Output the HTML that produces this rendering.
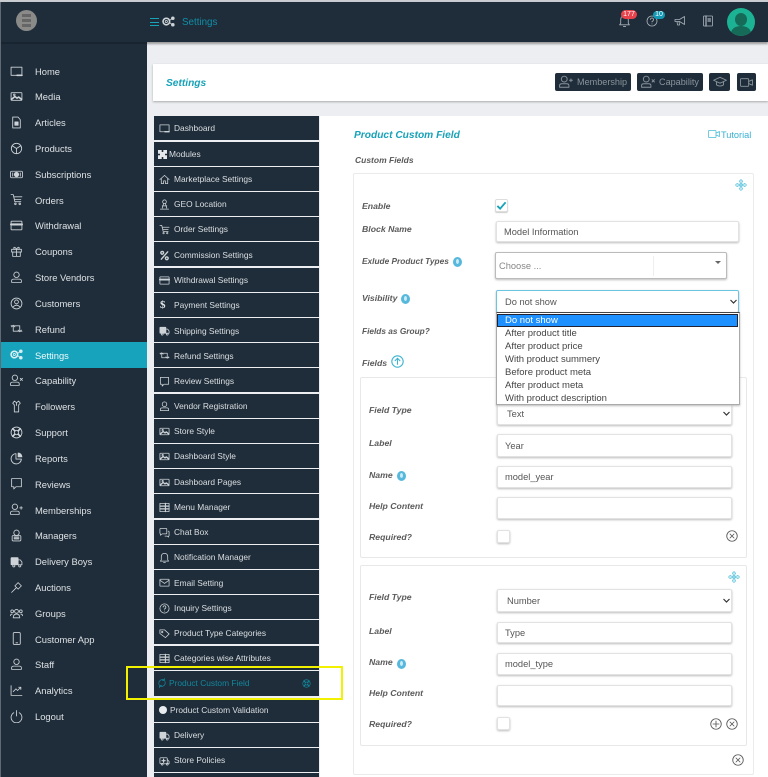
<!DOCTYPE html>
<html lang="en"><head><meta charset="utf-8"><title>Settings</title>
<style>
*{box-sizing:border-box}
html,body{margin:0;padding:0}
body{width:768px;height:777px;overflow:hidden;position:relative;background:#eceef2;font-family:"Liberation Sans",sans-serif;color:#444;filter:blur(.3px)}
.a{position:absolute}
.t{position:absolute;white-space:nowrap;line-height:12px;transform:translateY(-6px)}
.side{font-size:9.4px;color:#dde1e4;left:35px}
.sub{font-size:8.4px;color:#dbdfe2;left:174px}
.ic{position:absolute;width:13px;height:13px;color:#ced3d7;fill:none;stroke:currentColor;stroke-width:1.6;stroke-linecap:round;stroke-linejoin:round}
.si{width:11px;height:11px;left:159px;stroke-width:1.7}
.mi{left:10px}
.bar{position:absolute;left:154px;width:165px;height:24.2px;background:#1f2d3a}
.lb{position:absolute;white-space:nowrap;font-size:8.7px;font-style:italic;font-weight:bold;color:#5a5a5a;line-height:12px;transform:translateY(-6px)}
.in{position:absolute;background:#fff;border:1px solid #e2e2e2;border-radius:2px;box-shadow:0 1px 2px #bbb;font-size:9.3px;color:#555;line-height:20px;padding-left:7px}
.op{position:absolute;left:497px;width:241px;height:13px;font-size:9.5px;line-height:13px;padding-left:8px;color:#444;white-space:nowrap}
.info{position:absolute;width:9px;height:10px;border-radius:50%;background:#55b8dc}
.info:after{content:"";position:absolute;left:3px;top:2px;width:3px;height:5px;background:#cdebf5;border-radius:50%}
.btn{position:absolute;top:73px;height:18px;background:#1f2d3a;border-radius:2px;color:#8a949c;font-size:9.1px;line-height:18px;white-space:nowrap}
.tb{color:#aab3ba}
.teal{color:#5cc4dc}
</style></head><body>
<svg width="0" height="0" style="position:absolute"><defs>
<symbol id="mon" viewBox="0 0 24 24"><rect x="2" y="4" width="20" height="15"/><path d="M13 19h9" stroke-width="3"/></symbol>
<symbol id="img" viewBox="0 0 24 24"><rect x="2" y="5" width="20" height="14" rx="1"/><path d="M3 17l6-5 4 3 3-2 5 4" stroke-width="3"/><circle cx="8" cy="9" r="1.5"/></symbol>
<symbol id="doc" viewBox="0 0 24 24"><path d="M5 2h10l4 5v15H5z"/><rect x="9" y="11" width="6" height="6" fill="currentColor"/></symbol>
<symbol id="box" viewBox="0 0 24 24"><circle cx="12" cy="12" r="9.5"/><path d="M4 7l8 5 8-5M12 12v9"/></symbol>
<symbol id="cash" viewBox="0 0 24 24"><rect x="1" y="6" width="22" height="12" rx="2"/><circle cx="12" cy="12" r="4" fill="currentColor"/><path d="M5 9v6M19 9v6"/></symbol>
<symbol id="cart" viewBox="0 0 24 24"><path d="M2 3h4l3 13h11M7 7h15M8 12h12"/><circle cx="10" cy="20" r="1.5"/><circle cx="18" cy="20" r="1.5"/></symbol>
<symbol id="card" viewBox="0 0 24 24"><rect x="2" y="4" width="20" height="16" rx="1"/><path d="M2 10h20" stroke-width="4"/></symbol>
<symbol id="gift" viewBox="0 0 24 24"><rect x="3" y="8" width="18" height="5"/><path d="M5 13v8h14v-8M12 8v13M12 8C9 2 5 4 8 8M12 8c3-6 7-4 4 0"/></symbol>
<symbol id="user" viewBox="0 0 24 24"><circle cx="12" cy="7" r="5"/><path d="M3 21v-3q0-3 4-3h10q4 0 4 3v3z"/></symbol>
<symbol id="ucirc" viewBox="0 0 24 24"><circle cx="12" cy="12" r="10"/><circle cx="12" cy="9" r="3.5"/><path d="M6 18q6-6 12 0"/></symbol>
<symbol id="crop" viewBox="0 0 24 24"><path d="M6 6v11h16M18 18V7H2M3 9l3-3 3 3M15 15l3 3 3-3"/></symbol>
<symbol id="gear" viewBox="0 0 24 24"><circle cx="8" cy="12" r="6" stroke-dasharray="3 1.4" stroke-width="3"/><circle cx="8" cy="12" r="2"/><circle cx="20" cy="6" r="2.5" fill="currentColor"/><circle cx="20" cy="18" r="2.5" fill="currentColor"/><path d="M14 10l4-3M14 14l4 3"/></symbol>
<symbol id="uplus" viewBox="0 0 24 24"><circle cx="9" cy="7" r="5"/><path d="M1 21v-3q0-3 4-3h8q4 0 4 3v3zM18 9h5M20.500 6.500v5"/></symbol>
<symbol id="ux" viewBox="0 0 24 24"><circle cx="9" cy="7" r="5"/><path d="M1 21v-3q0-3 4-3h8q4 0 4 3v3zM19 8l4 4M23 8l-4 4"/></symbol>
<symbol id="shirt" viewBox="0 0 24 24"><path d="M8 2l4 3 4-3 3 4-3 3v13H8V9L5 6zM12 5v5"/></symbol>
<symbol id="life" viewBox="0 0 24 24"><circle cx="12" cy="12" r="10"/><circle cx="12" cy="12" r="4"/><path d="M5 5l4 4M19 5l-4 4M5 19l4-4M19 19l-4-4" stroke-width="3"/></symbol>
<symbol id="pie" viewBox="0 0 24 24"><path d="M11 3a9.500 9.500 0 1 0 10 10H11z"/><path d="M15 2a7 7 0 0 1 7 7h-7z" fill="currentColor"/></symbol>
<symbol id="chat" viewBox="0 0 24 24"><path d="M3 3h18v15H11l-4 4v-4H3z"/></symbol>
<symbol id="mgr" viewBox="0 0 24 24"><circle cx="12" cy="7" r="5"/><rect x="4" y="12" width="16" height="10" rx="2"/><path d="M8 15h8M8 18h8" stroke-width="2.500"/></symbol>
<symbol id="truck" viewBox="0 0 24 24"><rect x="2" y="5" width="13" height="13" rx="1" fill="currentColor"/><path d="M15 9h4l3 4v5h-7"/><circle cx="7" cy="20" r="2"/><circle cx="18" cy="20" r="2"/></symbol>
<symbol id="gavel" viewBox="0 0 24 24"><path d="M3 21l8-8M9 9l6-6 6 6-6 6z"/></symbol>
<symbol id="grp" viewBox="0 0 24 24"><circle cx="12" cy="8" r="3.500"/><circle cx="4" cy="8" r="2.500"/><circle cx="20" cy="8" r="2.500"/><path d="M6 20q0-7 6-7t6 7zM1 16q0-3 3-3M23 16q0-3-3-3"/></symbol>
<symbol id="phone" viewBox="0 0 24 24"><rect x="6" y="1" width="13" height="22" rx="2"/><path d="M11 20h3"/></symbol>
<symbol id="chart" viewBox="0 0 24 24"><path d="M2 3v18h20M6 14l5-5 3 3 6-6M16 6h4v4"/></symbol>
<symbol id="power" viewBox="0 0 24 24"><path d="M7 5a10 10 0 1 0 10 0M12 1v10"/></symbol>
<symbol id="home" viewBox="0 0 24 24"><path d="M2 12L12 3l10 9M5 10v11h5v-6h4v6h5V10"/></symbol>
<symbol id="geo" viewBox="0 0 24 24"><circle cx="12" cy="6" r="4"/><path d="M10 10l-3 10M14 10l3 10M3 22h18M7 15h10"/></symbol>
<symbol id="pct" viewBox="0 0 24 24"><path d="M19 4L5 20" stroke-width="3"/><circle cx="7" cy="6" r="3" stroke-width="3"/><circle cx="17" cy="18" r="3" stroke-width="3"/></symbol>
<symbol id="menu" viewBox="0 0 24 24"><rect x="2" y="3" width="20" height="18"/><path d="M2 9h20M2 15h20M14 3v18" stroke-width="2.500"/></symbol>
<symbol id="chats" viewBox="0 0 24 24"><path d="M2 5q0-2 2-2h11q2 0 2 2v8q0 2-2 2H7l-4 3v-3q-1-1-1-2z"/><path d="M20 9q2 0 2 2v7q0 1-1 2v2l-3-2h-5"/></symbol>
<symbol id="bell" viewBox="0 0 24 24"><path d="M12 3q-7 0-7 8v6l-2 3h18l-2-3v-6q0-8-7-8zM10 23h4"/></symbol>
<symbol id="mail" viewBox="0 0 24 24"><rect x="2" y="5" width="20" height="15" rx="1"/><path d="M2 7l10 7 10-7"/></symbol>
<symbol id="q" viewBox="0 0 24 24"><circle cx="12" cy="12" r="10"/><path d="M9 9q0-3 3-3t3 3-3 4v1M12 17.500v.5"/></symbol>
<symbol id="tag" viewBox="0 0 24 24"><path d="M2 4h10l10 9-8 8L2 12z"/><circle cx="7" cy="9" r="1.500"/></symbol>
<symbol id="sync" viewBox="0 0 24 24"><path d="M5 16A9 9 0 0 1 18 5M19 8a9 9 0 0 1-13 11M18 1v5h-5M6 23v-5h5"/></symbol>
<symbol id="med" viewBox="0 0 24 24"><rect x="2" y="6" width="16" height="13" rx="2"/><path d="M10 9v7M6.500 12.500h7" stroke-width="2.500"/><path d="M18 10l4 4v5h-4"/><circle cx="7" cy="20" r="2"/><circle cx="18" cy="20" r="2"/></symbol>
<symbol id="move" viewBox="0 0 24 24"><path d="M12 6v12M6 12h12M9 4l3-3 3 3v2H9zM9 20l3 3 3-3v-2H9zM4 9l-3 3 3 3h2V9zM20 9l3 3-3 3h-2V9z"/><circle cx="12" cy="12" r="3"/></symbol>
<symbol id="xc" viewBox="0 0 24 24"><circle cx="12" cy="12" r="10.500"/><path d="M8 8l8 8M16 8l-8 8"/></symbol>
<symbol id="plc" viewBox="0 0 24 24"><circle cx="12" cy="12" r="10.500"/><path d="M12 6v12M6 12h12"/></symbol>
<symbol id="vid" viewBox="0 0 24 24"><rect x="1" y="5" width="15" height="14" rx="1"/><path d="M16 10l7-3v10l-7-3"/></symbol>
<symbol id="cap" viewBox="0 0 24 24"><path d="M1 9l11-5 11 5-11 5zM6 12v5q6 4 12 0v-5"/></symbol>
<symbol id="mega" viewBox="0 0 24 24"><path d="M2 9h9l10-6v16l-10-6H2zM6 13l1 7h4l-1-7"/></symbol>
<symbol id="book" viewBox="0 0 24 24"><rect x="3" y="2" width="18" height="20" rx="1"/><path d="M8 2v20M12 8h5M12 12h5" stroke-width="2.500"/></symbol>
</defs></svg>

<!-- sidebar and topbar -->
<div class="a" style="left:0;top:0;width:768px;height:2px;background:#c9ccd0"></div>
<div class="a" style="left:0;top:2px;width:768px;height:40px;background:#1f2d3a;box-shadow:0 2px 2px #999"></div>
<div class="a" style="left:0;top:2px;width:147px;height:775px;background:#1f2d3a;border-left:1px solid #5f6a74"></div>
<div class="a" style="left:1px;top:42px;width:146px;height:2px;background:#18242f"></div>
<div class="a" style="left:1px;top:342px;width:146px;height:25.500px;background:#16a3bb"></div>

<div class="a" style="left:16px;top:10px;width:21px;height:21px;border-radius:50%;background:#8a8a88"></div>
<div class="a" style="left:22px;top:14px;width:9px;height:14px;background:repeating-linear-gradient(#666 0 3px,#8a8a88 3px 5px)"></div>

<div class="a" style="left:150px;top:18px;width:9px;height:8px;border-top:1px solid #17a2b8;border-bottom:1px solid #17a2b8"></div>
<div class="a" style="left:150px;top:21.500px;width:9px;height:1px;background:#17a2b8"></div>
<svg class="ic" style="left:162px;top:15px;width:13px;height:13px"><use href="#gear"/></svg>
<div class="t" style="left:182px;top:23px;font-size:9.800px;color:#118ea6">Settings</div>

<svg class="ic tb" style="left:618px;top:14px;width:13px;height:13px"><use href="#bell"/></svg>
<div class="a" style="left:621px;top:10px;width:16px;height:9px;border-radius:5px;background:#e8434c;color:#fff;font-size:7px;line-height:9px;text-align:center">177</div>
<svg class="ic tb" style="left:646px;top:15px;width:12px;height:12px"><use href="#q"/></svg>
<div class="a" style="left:653px;top:11px;width:12px;height:8px;border-radius:4px;background:#1499b5;color:#fff;font-size:7px;line-height:8px;text-align:center">10</div>
<svg class="ic tb" style="left:674px;top:15px;width:12px;height:12px"><use href="#mega"/></svg>
<svg class="ic tb" style="left:702px;top:15px;width:12px;height:12px"><use href="#book"/></svg>
<div class="a" style="left:727px;top:8px;width:28px;height:28px;border-radius:50%;background:#1bb394;overflow:hidden">
<div class="a" style="left:8px;top:5px;width:12px;height:13px;border-radius:50%;background:#166a58"></div>
<div class="a" style="left:4px;top:18px;width:20px;height:14px;border-radius:50%;background:#166a58"></div></div>

<svg class="ic mi" style="top:65px"><use href="#mon"/></svg><div class="t side" style="top:71.500px">Home</div>
<svg class="ic mi" style="top:90px"><use href="#img"/></svg><div class="t side" style="top:97px">Media</div>
<svg class="ic mi" style="top:116px"><use href="#doc"/></svg><div class="t side" style="top:123px">Articles</div>
<svg class="ic mi" style="top:142px"><use href="#box"/></svg><div class="t side" style="top:149px">Products</div>
<svg class="ic mi" style="top:168px"><use href="#cash"/></svg><div class="t side" style="top:175px">Subscriptions</div>
<svg class="ic mi" style="top:193px"><use href="#cart"/></svg><div class="t side" style="top:200.500px">Orders</div>
<svg class="ic mi" style="top:219px"><use href="#card"/></svg><div class="t side" style="top:226px">Withdrawal</div>
<svg class="ic mi" style="top:245px"><use href="#gift"/></svg><div class="t side" style="top:252px">Coupons</div>
<svg class="ic mi" style="top:271px"><use href="#user"/></svg><div class="t side" style="top:278px">Store Vendors</div>
<svg class="ic mi" style="top:297px"><use href="#ucirc"/></svg><div class="t side" style="top:304px">Customers</div>
<svg class="ic mi" style="top:322px"><use href="#crop"/></svg><div class="t side" style="top:329.500px">Refund</div>
<svg class="ic mi" style="top:348px;color:#d8f0f4"><use href="#gear"/></svg><div class="t side" style="top:355.500px;color:#eefafc">Settings</div>
<svg class="ic mi" style="top:374px"><use href="#ux"/></svg><div class="t side" style="top:381px">Capability</div>
<svg class="ic mi" style="top:400px"><use href="#shirt"/></svg><div class="t side" style="top:407px">Followers</div>
<svg class="ic mi" style="top:426px"><use href="#life"/></svg><div class="t side" style="top:433px">Support</div>
<svg class="ic mi" style="top:452px"><use href="#pie"/></svg><div class="t side" style="top:459px">Reports</div>
<svg class="ic mi" style="top:477px"><use href="#chat"/></svg><div class="t side" style="top:484.500px">Reviews</div>
<svg class="ic mi" style="top:503px"><use href="#uplus"/></svg><div class="t side" style="top:510.500px">Memberships</div>
<svg class="ic mi" style="top:529px"><use href="#mgr"/></svg><div class="t side" style="top:536px">Managers</div>
<svg class="ic mi" style="top:555px"><use href="#truck"/></svg><div class="t side" style="top:562px">Delivery Boys</div>
<svg class="ic mi" style="top:581px"><use href="#gavel"/></svg><div class="t side" style="top:588px">Auctions</div>
<svg class="ic mi" style="top:607px"><use href="#grp"/></svg><div class="t side" style="top:614px">Groups</div>
<svg class="ic mi" style="top:632px"><use href="#phone"/></svg><div class="t side" style="top:639.500px">Customer App</div>
<svg class="ic mi" style="top:658px"><use href="#user"/></svg><div class="t side" style="top:665px">Staff</div>
<svg class="ic mi" style="top:684px"><use href="#chart"/></svg><div class="t side" style="top:691px">Analytics</div>
<svg class="ic mi" style="top:710px"><use href="#power"/></svg><div class="t side" style="top:717px">Logout</div>

<!-- header band -->
<div class="a" style="left:153px;top:64px;width:615px;height:37px;background:#fff;box-shadow:0 1px 2px #aaa"></div>
<div class="t" style="left:166px;top:84px;font-size:10.200px;font-style:italic;font-weight:bold;color:#17a2b8">Settings</div>
<div class="btn" style="left:555px;width:76px;padding-left:22px">Membership</div>
<svg class="ic" style="left:559px;top:75px;color:#8a949c;width:14px;height:14px"><use href="#uplus"/></svg>
<div class="btn" style="left:637px;width:66px;padding-left:22px">Capability</div>
<svg class="ic" style="left:641px;top:75px;color:#8a949c;width:14px;height:14px"><use href="#ux"/></svg>
<div class="btn" style="left:709px;width:21px"></div>
<svg class="ic" style="left:713px;top:75px;color:#8a949c;width:14px;height:14px"><use href="#cap"/></svg>
<div class="btn" style="left:737px;width:19px"></div>
<svg class="ic" style="left:740px;top:76px;width:13px;height:13px;color:#8a949c"><use href="#vid"/></svg>

<!-- content -->
<div class="a" style="left:320px;top:116px;width:448px;height:661px;background:#fff"></div>

<div class="bar" style="top:116px"></div><svg class="ic si" style="top:123px"><use href="#mon"/></svg><div class="t sub" style="top:128px">Dashboard</div>
<div class="bar" style="top:141.500px"></div><svg class="a" style="left:158px;top:150px;width:9px;height:9px" viewBox="0 0 9 9"><rect width="9" height="9" fill="#e6e9eb"/><path d="M0 4.500L2 4.500M9 4.500H7M4.500 0V2M4.500 9V7" stroke="#1f2d3a" stroke-width="1.600"/></svg><div class="t sub" style="top:154px;left:169px">Modules</div>
<div class="bar" style="top:166.700px"></div><svg class="ic si" style="top:174px"><use href="#home"/></svg><div class="t sub" style="top:179px">Marketplace Settings</div>
<div class="bar" style="top:191.900px"></div><svg class="ic si" style="top:199px"><use href="#geo"/></svg><div class="t sub" style="top:204px">GEO Location</div>
<div class="bar" style="top:217.100px"></div><svg class="ic si" style="top:224px"><use href="#cart"/></svg><div class="t sub" style="top:229px">Order Settings</div>
<div class="bar" style="top:242.300px"></div><svg class="ic si" style="top:250px"><use href="#pct"/></svg><div class="t sub" style="top:255px">Commission Settings</div>
<div class="bar" style="top:267.500px"></div><svg class="ic si" style="top:275px"><use href="#card"/></svg><div class="t sub" style="top:280px">Withdrawal Settings</div>
<div class="bar" style="top:292.700px"></div><div class="t" style="left:160px;top:305px;font-size:11px;font-weight:bold;color:#e6e9eb;font-family:'Liberation Serif',serif">$</div><div class="t sub" style="top:305px">Payment Settings</div>
<div class="bar" style="top:317.900px"></div><svg class="ic si" style="top:325px"><use href="#truck"/></svg><div class="t sub" style="top:330.500px">Shipping Settings</div>
<div class="bar" style="top:343.100px"></div><svg class="ic si" style="top:350px"><use href="#crop"/></svg><div class="t sub" style="top:355.500px">Refund Settings</div>
<div class="bar" style="top:368.300px"></div><svg class="ic si" style="top:376px"><use href="#chat"/></svg><div class="t sub" style="top:381px">Review Settings</div>
<div class="bar" style="top:393.500px"></div><svg class="ic si" style="top:401px"><use href="#user"/></svg><div class="t sub" style="top:406px">Vendor Registration</div>
<div class="bar" style="top:418.700px"></div><svg class="ic si" style="top:426px"><use href="#img"/></svg><div class="t sub" style="top:431px">Store Style</div>
<div class="bar" style="top:443.900px"></div><svg class="ic si" style="top:451px"><use href="#img"/></svg><div class="t sub" style="top:456px">Dashboard Style</div>
<div class="bar" style="top:469.100px"></div><svg class="ic si" style="top:477px"><use href="#img"/></svg><div class="t sub" style="top:482px">Dashboard Pages</div>
<div class="bar" style="top:494.300px"></div><svg class="ic si" style="top:502px"><use href="#menu"/></svg><div class="t sub" style="top:507px">Menu Manager</div>
<div class="bar" style="top:519.500px"></div><svg class="ic si" style="top:527px"><use href="#chats"/></svg><div class="t sub" style="top:532px">Chat Box</div>
<div class="bar" style="top:544.700px"></div><svg class="ic si" style="top:552px"><use href="#bell"/></svg><div class="t sub" style="top:557px">Notification Manager</div>
<div class="bar" style="top:569.900px"></div><svg class="ic si" style="top:577px"><use href="#mail"/></svg><div class="t sub" style="top:582.500px">Email Setting</div>
<div class="bar" style="top:595.100px"></div><svg class="ic si" style="top:603px"><use href="#q"/></svg><div class="t sub" style="top:608px">Inquiry Settings</div>
<div class="bar" style="top:620.300px"></div><svg class="ic si" style="top:628px"><use href="#tag"/></svg><div class="t sub" style="top:633px">Product Type Categories</div>
<div class="bar" style="top:645.500px"></div><svg class="ic si" style="top:653px"><use href="#menu"/></svg><div class="t sub" style="top:658px">Categories wise Attributes</div>
<div class="bar" style="top:670.700px;height:25.500px"></div><svg class="ic si" style="top:678px;left:157px;width:10px;height:10px;color:#12879c"><use href="#sync"/></svg><div class="t sub" style="top:683px;left:169px;color:#12879c">Product Custom Field</div>
<svg class="ic si" style="top:679px;left:302px;width:9px;height:9px;color:#12879c"><use href="#life"/></svg>
<div class="bar" style="top:697.500px;height:24.700px"></div><div class="a" style="left:159px;top:706px;width:8px;height:8px;border-radius:50%;background:#e8ecef"></div><div class="t sub" style="top:710px;left:170px">Product Custom Validation</div>
<div class="bar" style="top:723px"></div><svg class="ic si" style="top:730px"><use href="#truck"/></svg><div class="t sub" style="top:735px">Delivery</div>
<div class="bar" style="top:748.200px"></div><svg class="ic si" style="top:755px"><use href="#med"/></svg><div class="t sub" style="top:760px">Store Policies</div>
<div class="bar" style="top:773.300px;height:4px"></div>

<div class="a" style="left:126px;top:666px;width:217px;height:34px;border:2px solid #f2f200"></div>

<div class="t" style="left:354px;top:136px;font-size:10.200px;font-style:italic;font-weight:bold;color:#17a2b8">Product Custom Field</div>
<svg class="ic" style="left:708px;top:128px;width:12px;height:12px;color:#46bcd6;stroke-width:1.500"><use href="#vid"/></svg>
<div class="t" style="left:721px;top:135px;font-size:9.200px;color:#36b0d4">Tutorial</div>
<div class="lb" style="left:355px;top:159.500px;font-size:8.500px">Custom Fields</div>

<div class="a" style="left:353px;top:173px;width:401px;height:602px;border:1px solid #ebebeb;border-radius:2px"></div>
<svg class="ic teal" style="left:735px;top:179px;width:12px;height:12px;stroke-width:1.500"><use href="#move"/></svg>

<div class="lb" style="left:362px;top:206px">Enable</div>
<div class="a" style="left:495px;top:199px;width:13px;height:13px;background:#fff;border:1px solid #ddd;border-radius:2px;box-shadow:0 1px 1px #ccc"></div>
<svg class="a" style="left:496px;top:200px;width:11px;height:11px" viewBox="0 0 12 12"><path d="M1.500 6.500l3 3 6-7" fill="none" stroke="#17a2b8" stroke-width="2"/></svg>
<div class="lb" style="left:362px;top:229px">Block Name</div>
<div class="in" style="left:496px;top:221px;width:243px;height:21px">Model Information</div>
<div class="lb" style="left:362px;top:261px;font-size:8.300px">Exlude Product Types</div><div class="info" style="left:453px;top:257px"></div>
<div class="in" style="left:495px;top:252px;width:232px;height:27px;border-color:#bbb;line-height:27px;padding-left:3px;color:#888">Choose ...</div>
<div class="a" style="left:653px;top:256px;width:1px;height:20px;background:#eee"></div>
<div class="a" style="left:715px;top:261px;border:3px solid transparent;border-top:3px solid #666"></div>

<div class="lb" style="left:362px;top:298px">Visibility</div><div class="info" style="left:401px;top:294px"></div>
<div class="in" style="left:496px;top:290px;width:243px;height:23px;border-color:#6cc5e0;line-height:22px;padding-left:8px">Do not show</div>
<svg class="a" style="left:730px;top:299px;width:7px;height:5px" viewBox="0 0 7 5"><path d="M.5 1l3 3 3-3" fill="none" stroke="#333" stroke-width="1.200"/></svg>

<div class="lb" style="left:362px;top:331px;font-size:8.300px">Fields as Group?</div>
<div class="lb" style="left:362px;top:363px">Fields</div>
<svg class="a" style="left:391px;top:355px;width:13px;height:13px" viewBox="0 0 24 24" fill="none" stroke="#3db4d0" stroke-width="2"><circle cx="12" cy="12" r="10.500"/><path d="M12 18V6M7 11l5-5 5 5"/></svg>

<div class="a" style="left:360px;top:377px;width:387px;height:181px;border:1px solid #e8e8e8;border-radius:2px"></div>
<div class="lb" style="left:369px;top:410px">Field Type</div>
<div class="in" style="left:497px;top:402px;width:235px;height:23px;line-height:22px;padding-left:9px">Text</div>
<svg class="a" style="left:723px;top:411px;width:7px;height:5px" viewBox="0 0 7 5"><path d="M.5 1l3 3 3-3" fill="none" stroke="#333" stroke-width="1.200"/></svg>
<div class="lb" style="left:369px;top:443px">Label</div>
<div class="in" style="left:497px;top:434px;width:235px;height:23px;line-height:22px">Year</div>
<div class="lb" style="left:369px;top:475px">Name</div><div class="info" style="left:397px;top:471px"></div>
<div class="in" style="left:497px;top:466px;width:235px;height:22px">model_year</div>
<div class="lb" style="left:369px;top:506px">Help Content</div>
<div class="in" style="left:497px;top:497px;width:235px;height:22px"></div>
<div class="lb" style="left:369px;top:537px">Required?</div>
<div class="in" style="left:497px;top:530px;width:13px;height:13px;padding:0"></div>
<svg class="ic" style="left:726px;top:530px;width:12px;height:12px;color:#555;stroke-width:1.700"><use href="#xc"/></svg>

<!-- dropdown -->
<div class="a" style="left:496px;top:312px;width:244px;height:93px;background:#fff;border:1px solid #aaa;border-top:1px solid #444;box-shadow:0 1px 2px #bbb"></div>
<div class="op" style="top:313.500px;background:#1e90ff;color:#fff;outline:1px solid #223;outline-offset:-1px">Do not show</div>
<div class="op" style="top:326.500px">After product title</div>
<div class="op" style="top:339.500px">After product price</div>
<div class="op" style="top:352.500px">With product summery</div>
<div class="op" style="top:365.500px">Before product meta</div>
<div class="op" style="top:378.500px">After product meta</div>
<div class="op" style="top:391.500px">With product description</div>

<div class="a" style="left:360px;top:565px;width:387px;height:181px;border:1px solid #e8e8e8;border-radius:2px"></div>
<svg class="ic teal" style="left:728px;top:571px;width:12px;height:12px;stroke-width:1.500"><use href="#move"/></svg>
<div class="lb" style="left:369px;top:597px">Field Type</div>
<div class="in" style="left:497px;top:589px;width:235px;height:23px;line-height:23px;padding-left:9px">Number</div>
<svg class="a" style="left:723px;top:598px;width:7px;height:5px" viewBox="0 0 7 5"><path d="M.5 1l3 3 3-3" fill="none" stroke="#333" stroke-width="1.200"/></svg>
<div class="lb" style="left:369px;top:631px">Label</div>
<div class="in" style="left:497px;top:622px;width:235px;height:21px">Type</div>
<div class="lb" style="left:369px;top:662px">Name</div><div class="info" style="left:397px;top:659px"></div>
<div class="in" style="left:497px;top:653px;width:235px;height:22px">model_type</div>
<div class="lb" style="left:369px;top:693px">Help Content</div>
<div class="in" style="left:497px;top:685px;width:235px;height:21px"></div>
<div class="lb" style="left:369px;top:724px">Required?</div>
<div class="in" style="left:497px;top:717px;width:13px;height:13px;padding:0"></div>
<svg class="ic" style="left:710px;top:718px;width:12px;height:12px;color:#555;stroke-width:1.700"><use href="#plc"/></svg>
<svg class="ic" style="left:726px;top:718px;width:12px;height:12px;color:#555;stroke-width:1.700"><use href="#xc"/></svg>
<svg class="ic" style="left:732px;top:754px;width:12px;height:12px;color:#555;stroke-width:1.700"><use href="#xc"/></svg>
</body></html>
